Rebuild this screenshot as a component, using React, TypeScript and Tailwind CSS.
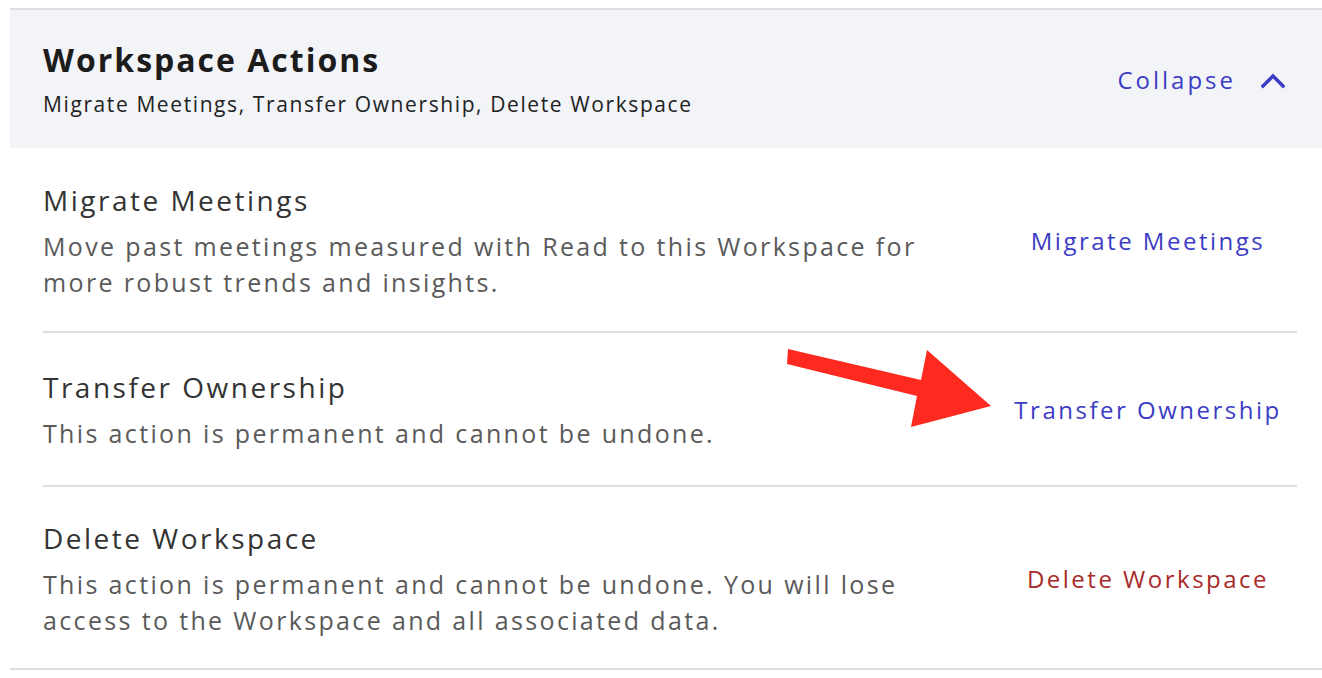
import React from "react";

const font = { fontFamily: '"Open Sans", "Noto Sans", sans-serif' };

function Left({ title, desc }: { title: string; desc: string }) {
  return (
    <div className="flex-1 min-w-0">
      <div className="text-[28px] leading-[36px] font-medium text-[#333333] tracking-[2.5px]">{title}</div>
      <div className="mt-[10px] text-[25px] leading-[36px] text-[#5a5a5a] tracking-[2.35px] max-w-[915px]">
        {desc}
      </div>
    </div>
  );
}

function Action({ label, danger }: { label: string; danger?: boolean }) {
  return (
    <div className="w-[300px] flex justify-center shrink-0 pl-[2px]">
      <span
        className={`text-[24px] leading-[36px] tracking-[2.5px] ${
          danger ? "text-[#a82a2a]" : "text-[#3c3cc4]"
        }`}
      >
        {label}
      </span>
    </div>
  );
}

export default function App() {
  return (
    <div className="w-[1322px] h-[678px] bg-white overflow-hidden relative" style={font}>
      <div className="ml-[10px] mt-[8px] border-t-2 border-[#dedede]">
        <div className="bg-[#f3f4f8] h-[138px] pl-[33px] pr-[37px] flex items-center justify-between">
          <div className="pt-[2px]">
            <div className="text-[32px] leading-[36px] font-bold text-[#1c1c1c] tracking-[2px]">
              Workspace Actions
            </div>
            <div className="mt-[12px] text-[21px] leading-[28px] text-[#222222] tracking-[1.6px]">
              Migrate Meetings, Transfer Ownership, Delete Workspace
            </div>
          </div>
          <div className="flex items-center gap-[28px] pt-[2px]">
            <span className="text-[24px] leading-[36px] text-[#3c3cc4] tracking-[3px] -mr-[3px]">Collapse</span>
            <svg width="24" height="16" viewBox="0 0 24 16" className="mt-[2px]">
              <path
                d="M2 13 L12 3 L22 13"
                fill="none"
                stroke="#3c3cc4"
                strokeWidth="3.4"
                strokeLinecap="square"
              />
            </svg>
          </div>
        </div>
        <div className="pl-[33px] pr-[25px]">
          <div className="flex items-center border-b-2 border-[#dedede] pt-[34px] pb-[31px]">
            <Left
              title="Migrate Meetings"
              desc="Move past meetings measured with Read to this Workspace for more robust trends and insights."
            />
            <Action label="Migrate Meetings" />
          </div>
          <div className="flex items-center border-b-2 border-[#dedede] pt-[36px] pb-[34px]">
            <Left title="Transfer Ownership" desc="This action is permanent and cannot be undone." />
            <Action label="Transfer Ownership" />
          </div>
        </div>
        <div className="border-b-2 border-[#dedede] pl-[33px] pr-[25px] pt-[33px] pb-[30px] flex items-center">
          <Left
            title="Delete Workspace"
            desc="This action is permanent and cannot be undone. You will lose access to the Workspace and all associated data."
          />
          <Action label="Delete Workspace" danger />
        </div>
      </div>
      <svg
        className="absolute left-0 top-0 pointer-events-none"
        width="1322"
        height="678"
        viewBox="0 0 1322 678"
      >
        <polygon
          points="788,349 921,380 927,350 991,406 911,427 917,396 787,364"
          fill="#ff2a1f"
        />
      </svg>
    </div>
  );
}
